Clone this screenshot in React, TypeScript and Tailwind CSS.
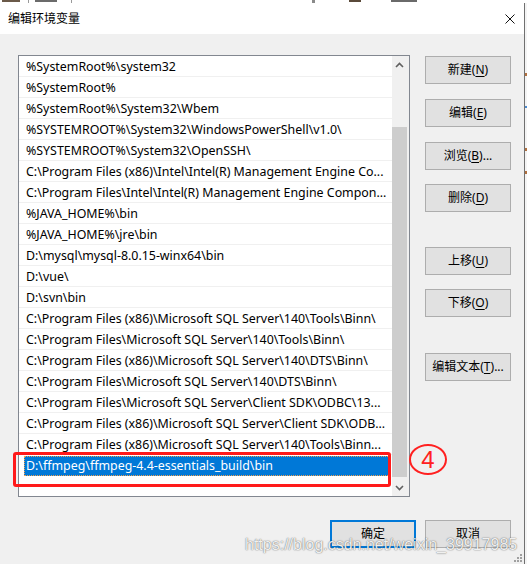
import React from "react";

const paths = [
  "%SystemRoot%\\system32",
  "%SystemRoot%",
  "%SystemRoot%\\System32\\Wbem",
  "%SYSTEMROOT%\\System32\\WindowsPowerShell\\v1.0\\",
  "%SYSTEMROOT%\\System32\\OpenSSH\\",
  "C:\\Program Files (x86)\\Intel\\Intel(R) Management Engine Co...",
  "C:\\Program Files\\Intel\\Intel(R) Management Engine Compon...",
  "%JAVA_HOME%\\bin",
  "%JAVA_HOME%\\jre\\bin",
  "D:\\mysql\\mysql-8.0.15-winx64\\bin",
  "D:\\vue\\",
  "D:\\svn\\bin",
  "C:\\Program Files (x86)\\Microsoft SQL Server\\140\\Tools\\Binn\\",
  "C:\\Program Files\\Microsoft SQL Server\\140\\Tools\\Binn\\",
  "C:\\Program Files (x86)\\Microsoft SQL Server\\140\\DTS\\Binn\\",
  "C:\\Program Files\\Microsoft SQL Server\\140\\DTS\\Binn\\",
  "C:\\Program Files\\Microsoft SQL Server\\Client SDK\\ODBC\\13...",
  "C:\\Program Files (x86)\\Microsoft SQL Server\\Client SDK\\ODB...",
  "C:\\Program Files (x86)\\Microsoft SQL Server\\140\\Tools\\Binn...",
];

const selected = "D:\\ffmpeg\\ffmpeg-4.4-essentials_build\\bin";

const WinButton = ({
  label,
  mnemonic,
  tail = "",
  className = "",
}: {
  label: string;
  mnemonic?: string;
  tail?: string;
  className?: string;
}) => (
  <div
    className={`flex h-[28px] w-[86px] items-center justify-center border border-[#adadad] bg-[#e1e1e1] text-[12px] text-black ${className}`}
  >
    <span>
      {label}
      {mnemonic && (
        <>
          (<span className="underline underline-offset-2">{mnemonic}</span>)
        </>
      )}
      {tail}
    </span>
  </div>
);

const Chevron = ({ down = false }: { down?: boolean }) => (
  <svg width="9" height="6" viewBox="0 0 9 6" className={down ? "rotate-180" : ""}>
    <path d="M1 5 L4.5 1.5 L8 5" fill="none" stroke="#606060" strokeWidth="1.6" />
  </svg>
);

export default function App() {
  return (
    <div
      className="relative h-[564px] w-[527px] overflow-hidden bg-white"
      style={{ fontFamily: '"Noto Sans", "Noto Sans CJK SC", sans-serif' }}
    >
      {/* window behind */}
      <div className="flex h-[3px] bg-white">
        <div className="ml-[2px] h-[2px] w-[18px] bg-[#6b5a4a]" />
        <div className="ml-[8px] h-[3px] w-px bg-[#9a9a9a]" />
        <div className="ml-[6px] h-[2px] w-[22px] bg-[#6b6b6b]" />
        <div className="ml-[14px] h-[3px] w-px bg-[#9a9a9a]" />
        <div className="ml-[240px] h-[3px] w-[3px] bg-[#8a8a8a]" />
        <div className="ml-[34px] h-[2px] w-[12px] bg-[#5a4a3a]" />
        <div className="ml-[30px] h-[2px] w-[26px] bg-[#6a6a6a]" />
      </div>

      <div className="flex h-[561px]">
        <div className="flex w-[525px] flex-col border-r border-[#707070]">
          {/* title bar */}
          <div className="flex h-[31px] items-center justify-between bg-white pl-[8px] pr-[9px]">
            <span className="pt-px text-[12px] text-black">编辑环境变量</span>
            <svg width="10" height="10" viewBox="0 0 10 10">
              <path d="M0.5 0.5 L9.5 9.5 M9.5 0.5 L0.5 9.5" stroke="#111" strokeWidth="1" />
            </svg>
          </div>

          {/* body */}
          <div className="relative flex flex-1 flex-col bg-[#f0f0f0]">
            <div className="flex pl-[18px] pt-[21px]">
              {/* list box */}
              <div className="flex h-[442px] w-[392px] border border-[#828790] bg-white">
                <div className="flex w-[373px] flex-col">
                  {paths.map((p) => (
                    <div
                      key={p}
                      className="flex h-[21px] shrink-0 items-center whitespace-nowrap border-b border-[#f0f0f0] pl-[7px] pt-[2px] text-[12.4px] text-black"
                    >
                      {p}
                    </div>
                  ))}
                  <div className="flex h-[21px] shrink-0 items-center pl-[5px] pr-[2px]">
                    <div className="flex h-[20px] w-full items-center whitespace-nowrap border border-dotted border-[#f0a050] bg-[#0078d7] pl-[1px] pt-[2px] text-[12.4px] text-white">
                      {selected}
                    </div>
                  </div>
                </div>
                {/* scrollbar */}
                <div className="flex w-[17px] flex-col bg-[#f0f0f0]">
                  <div className="flex h-[17px] items-center justify-center pr-[2px]">
                    <Chevron />
                  </div>
                  <div className="h-[54px]" />
                  <div className="h-[350px] w-[15px] bg-[#cdcdcd]" />
                  <div className="flex flex-1 items-end justify-center pb-[5px] pr-[2px]">
                    <Chevron down />
                  </div>
                </div>
              </div>

              {/* side buttons */}
              <div className="ml-[15px] flex flex-col">
                <WinButton label="新建" mnemonic="N" className="mt-px" />
                <WinButton label="编辑" mnemonic="E" className="mt-[15px]" />
                <WinButton label="浏览" mnemonic="B" tail="..." className="mt-[15px]" />
                <WinButton label="删除" mnemonic="D" className="mt-[14px]" />
                <WinButton label="上移" mnemonic="U" className="mt-[35px]" />
                <WinButton label="下移" mnemonic="O" className="mt-[14px]" />
                <WinButton label="编辑文本" mnemonic="T" tail="..." className="mt-[36px]" />
              </div>
            </div>

            {/* footer buttons */}
            <div className="mt-[23px] flex justify-end gap-[9px] pr-[13px]">
              <div className="flex h-[28px] w-[86px] items-center justify-center border-2 border-[#0078d7] bg-[#e1e1e1] text-[12px] text-black">
                确定
              </div>
              <WinButton label="取消" />
            </div>

            {/* annotation */}
            <div className="absolute left-[13px] top-[418px] h-[35px] w-[378px] rounded-[3px] border-[3px] border-[#ff1a1a]" />
            <div className="absolute left-[409px] top-[410px] flex h-[31px] w-[38px] items-center justify-center rounded-[50%] border-2 border-[#ff2020]">
              <span
                className="text-[24px] leading-none text-[#ff2020]"
                style={{ fontFamily: '"Liberation Sans", Arial, sans-serif' }}
              >
                4
              </span>
            </div>

            {/* resize grip */}
            <svg className="absolute bottom-[2px] right-[2px]" width="8" height="8" viewBox="0 0 8 8">
              {[
                [6, 0],
                [6, 3],
                [3, 3],
                [6, 6],
                [3, 6],
                [0, 6],
              ].map(([x, y]) => (
                <rect key={`${x}-${y}`} x={x} y={y} width="2" height="2" fill="#a0a0a0" />
              ))}
            </svg>
          </div>
        </div>

        {/* window behind, right edge */}
        <div className="flex flex-1 flex-col bg-[#f4f4f4]">
          <div className="mt-[70px] h-[3px] bg-[#b07040]" />
          <div className="mt-[30px] h-[2px] bg-[#4a8ad0]" />
          <div className="mt-[40px] h-[3px] bg-[#b07040]" />
          <div className="mt-[20px] h-[3px] bg-[#b07040]" />
        </div>
      </div>

      {/* watermark */}
      <div
        className="absolute left-[245px] top-[537px] whitespace-nowrap text-[16px] leading-none text-white/90 [text-shadow:0_0_1px_rgba(0,0,0,0.6),0_0_2px_rgba(0,0,0,0.25)]"
        style={{ fontFamily: '"Liberation Sans", Arial, sans-serif' }}
      >
        https://blog.csdn.net/weixin_39917985
      </div>
    </div>
  );
}
